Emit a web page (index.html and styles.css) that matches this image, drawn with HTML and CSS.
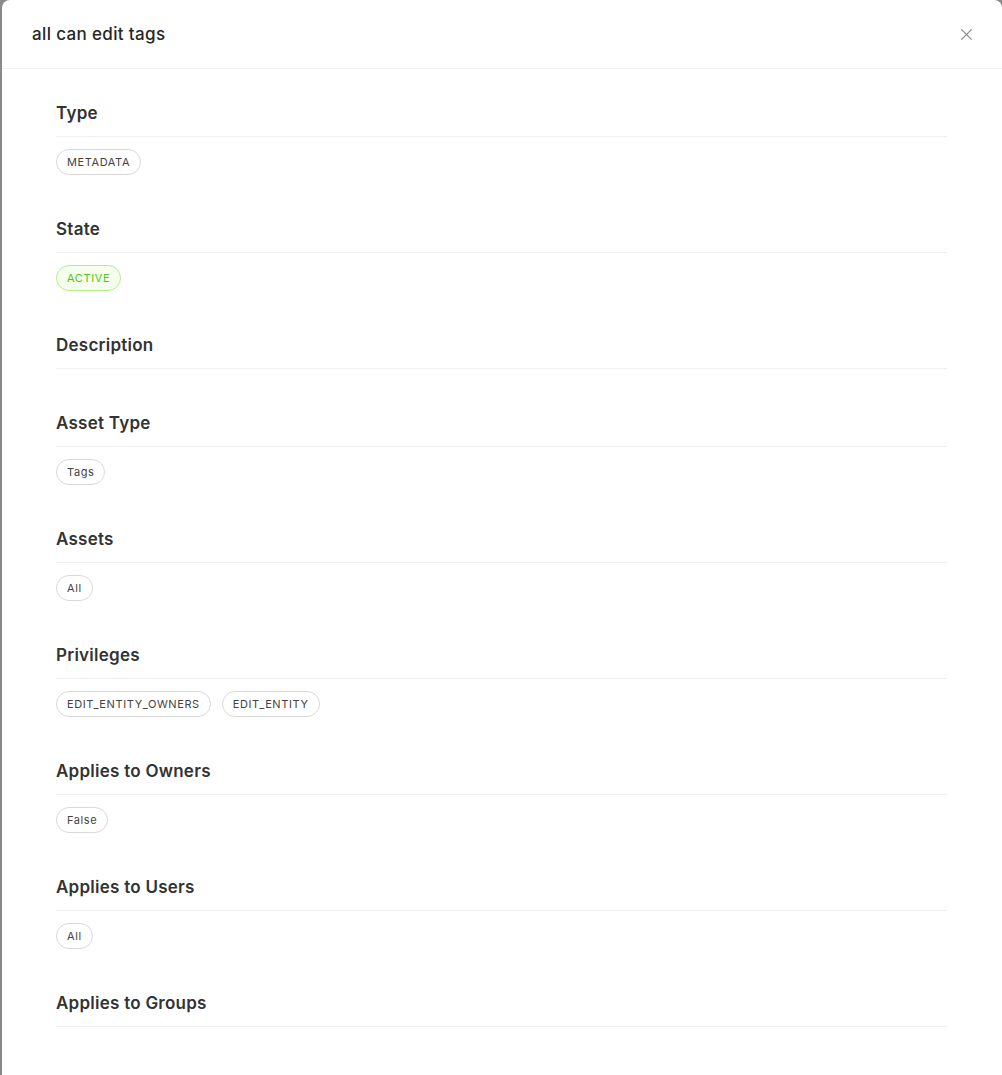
FILE: index.html
```html
<!DOCTYPE html>
<html lang="en">
<head>
    <meta charset="UTF-8">
    <meta name="viewport" content="width=device-width, initial-scale=1.0">
    <title>all can edit tags</title>
    <link rel="stylesheet" href="styles.css">
</head>
<body>
    <div class="modal">
        <div class="modal-header">
            <span class="modal-title">all can edit tags</span>
            <svg class="close-icon" viewBox="0 0 14 14" fill="none" stroke="currentColor" stroke-width="1.4">
                <path d="M1.5 1.5l11 11M12.5 1.5l-11 11" />
            </svg>
        </div>
        <div class="modal-body">
            <div class="section">
                <div class="section-title">Type</div>
                <div class="tags"><span class="tag">METADATA</span></div>
            </div>
            <div class="section">
                <div class="section-title">State</div>
                <div class="tags"><span class="tag tag-active">ACTIVE</span></div>
            </div>
            <div class="section">
                <div class="section-title">Description</div>
            </div>
            <div class="section">
                <div class="section-title">Asset Type</div>
                <div class="tags"><span class="tag">Tags</span></div>
            </div>
            <div class="section">
                <div class="section-title">Assets</div>
                <div class="tags"><span class="tag">All</span></div>
            </div>
            <div class="section">
                <div class="section-title">Privileges</div>
                <div class="tags">
                    <span class="tag">EDIT_ENTITY_OWNERS</span>
                    <span class="tag">EDIT_ENTITY</span>
                </div>
            </div>
            <div class="section">
                <div class="section-title">Applies to Owners</div>
                <div class="tags"><span class="tag">False</span></div>
            </div>
            <div class="section">
                <div class="section-title">Applies to Users</div>
                <div class="tags"><span class="tag">All</span></div>
            </div>
            <div class="section">
                <div class="section-title">Applies to Groups</div>
            </div>
        </div>
    </div>
</body>
</html>
```

FILE: styles.css
```css
html, body {
    margin: 0;
    padding: 0;
    height: 100%;
}
body {
    font-family: 'Inter', 'Noto Sans', sans-serif;
    background: #8a8a8a;
    color: #262626;
    overflow: hidden;
}
.modal {
    margin-left: 2px;
    min-height: 100%;
    background: #fff;
    border-radius: 8px 8px 0 0;
}
.modal-header {
    height: 69px;
    box-sizing: border-box;
    display: flex;
    align-items: center;
    justify-content: space-between;
    padding: 0 29px 0 30px;
    border-bottom: 1px solid #f0f0f0;
}
.modal-title {
    font-size: 17px;
    font-weight: 500;
    color: #262626;
    letter-spacing: 0.35px;
}
.close-icon {
    width: 13px;
    height: 13px;
    color: #8c8c8c;
}
.modal-body {
    padding: 32px 55px 0 54px;
}
.section {
    margin-bottom: 42px;
}
.section-title {
    font-size: 17px;
    font-weight: 600;
    line-height: 24px;
    color: #333;
    padding-bottom: 11px;
    border-bottom: 1px solid #f0f0f0;
    letter-spacing: 0.25px;
}
.tags {
    display: flex;
    gap: 11px;
    margin-top: 12px;
}
.tag {
    display: inline-block;
    height: 26px;
    line-height: 24px;
    box-sizing: border-box;
    padding: 0 10px;
    border: 1px solid #d9d9d9;
    border-radius: 13px;
    background: #fff;
    font-size: 11px;
    letter-spacing: 0.6px;
    color: #434343;
}
.tag-active {
    background: #f6ffed;
    border-color: #b7eb8f;
    color: #52c41a;
}
```
